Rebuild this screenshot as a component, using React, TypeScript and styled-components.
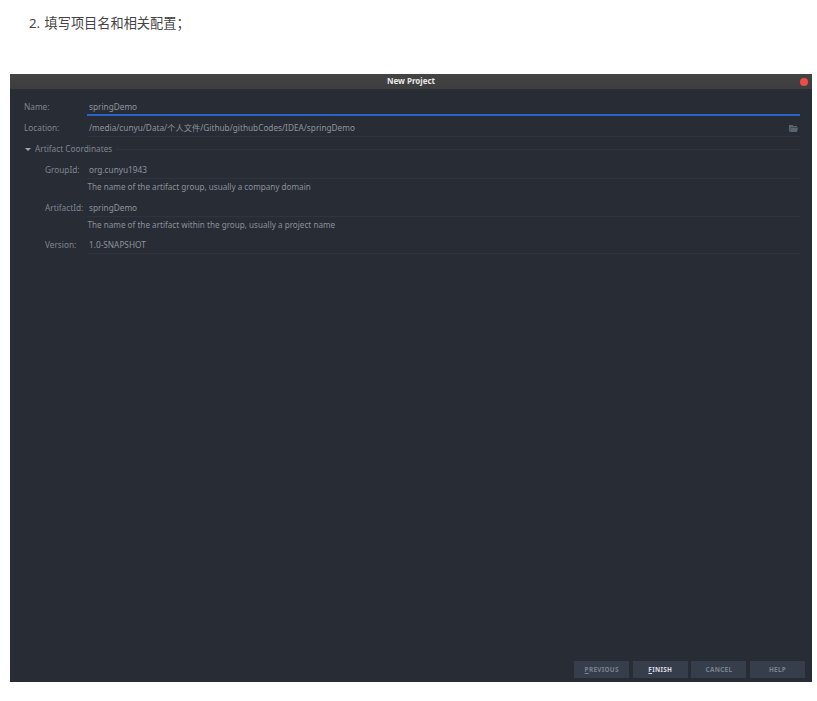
import React from "react";
import styled, { createGlobalStyle } from "styled-components";

const Global = createGlobalStyle`
  html, body { margin: 0; padding: 0; background: #fff; }
  body { font-family: "Noto Sans", "Noto Sans CJK SC", sans-serif; }
`;
const Page = styled.div`
  width: 817px; height: 701px; box-sizing: border-box; overflow: hidden;
  display: flex; flex-direction: column; padding: 0 5px 19px 10px;
`;
const Heading = styled.p`
  margin: 0; height: 74px; box-sizing: border-box; padding: 13px 0 0 19px;
  font: 13.2px/20px "Noto Sans", "Noto Sans CJK SC", sans-serif; color: #444; word-spacing: 1px;
`;
const Win = styled.div`
  flex: 1; display: flex; flex-direction: column; background: #282c34;
`;
const TitleBar = styled.div`
  height: 15px; box-sizing: border-box; padding-bottom: 1px; flex: none; position: relative;
  background: linear-gradient(#444, #3d3d3d);
  display: flex; align-items: center; justify-content: center;
  color: #e8e8e8; font: 700 8px/14px "Noto Sans", sans-serif;
`;
const Close = styled.span`
  position: absolute; right: 4px; top: 3.5px; width: 8px; height: 8px; border-radius: 50%; background: #ee4b44;
`;
const Body = styled.div`
  flex: 1; display: flex; flex-direction: column; padding: 10px 12px 0 14px;
  font: 8.25px/12px "Noto Sans", "Noto Sans CJK SC", sans-serif; color: #8b929d;
`;
const Row = styled.div<{ $indent?: number; $label: number; $top?: number }>`
  display: grid; grid-template-columns: ${(p) => p.$label}px 1fr;
  padding-left: ${(p) => p.$indent ?? 0}px; margin-top: ${(p) => p.$top ?? 0}px;
  align-items: stretch;
`;
const Label = styled.label`
  color: #7f8692; line-height: 15.5px;
`;
const Field = styled.div<{ $focused?: boolean }>`
  height: 17px; box-sizing: border-box; padding-left: 2px;
  display: flex; align-items: center; justify-content: space-between; line-height: 16px;
  color: #8d949f; border-bottom: ${(p) => (p.$focused ? "2px solid #2a62c8" : "1px solid #2f343d")};
`;
const Folder = styled.svg`
  width: 9px; height: 7px; margin-right: 2px; flex: none;
`;
const Section = styled.div`
  display: flex; align-items: center; margin-top: 5px; height: 14px; color: #7f8692;
`;
const Caret = styled.span`
  width: 0; height: 0; margin: 0 4px 0 1px; border: 3px solid transparent; border-top: 3.5px solid #a0a6b0; border-bottom: 0;
`;
const Rule = styled.span`
  flex: 1; margin-left: 4px; height: 1px; background: #2f343d;
`;
const Hint = styled.div`
  padding-left: 63.5px; margin: 1px 0 0 0; height: 14px; line-height: 14px; color: #8a909b; font-size: 8.15px;
`;
const Spacer = styled.div`flex: 1;`;
const Footer = styled.div`
  display: flex; justify-content: flex-end; gap: 3.6px; padding: 0 7px 4px 0; flex: none;
`;
const Btn = styled.button<{ $primary?: boolean }>`
  width: 55px; height: 17px; padding: 0; border: 0; background: #373e4b;
  font: 700 6.4px/17px "Noto Sans", sans-serif; letter-spacing: .3px;
  color: ${(p) => (p.$primary ? "#d9dce1" : "#79818e")};
  & u { text-underline-offset: 1px; }
`;

export default function App() {
  return (
    <Page>
      <Global />
      <Heading>2. 填写项目名和相关配置；</Heading>
      <Win>
        <TitleBar>New Project<Close /></TitleBar>
        <Body>
          <Row $label={63}>
            <Label>Name:</Label>
            <Field $focused>springDemo</Field>
          </Row>
          <Row $label={63} $top={4}>
            <Label>Location:</Label>
            <Field>
              /media/cunyu/Data/个人文件/Github/githubCodes/IDEA/springDemo
              <Folder viewBox="0 0 9 7"><path d="M0 0h3.5l1 1H8v1H2L1 6 0 7zM2.2 2.6H9L8 7H1z" fill="#5c6470" /></Folder>
            </Field>
          </Row>
          <Section><Caret />Artifact Coordinates<Rule /></Section>
          <Row $indent={21} $label={42} $top={6}>
            <Label>GroupId:</Label>
            <Field>org.cunyu1943</Field>
          </Row>
          <Hint>The name of the artifact group, usually a company domain</Hint>
          <Row $indent={21} $label={42} $top={6}>
            <Label>ArtifactId:</Label>
            <Field>springDemo</Field>
          </Row>
          <Hint>The name of the artifact within the group, usually a project name</Hint>
          <Row $indent={21} $label={42} $top={5}>
            <Label>Version:</Label>
            <Field>1.0-SNAPSHOT</Field>
          </Row>
          <Spacer />
        </Body>
        <Footer>
          <Btn><u>P</u>REVIOUS</Btn>
          <Btn $primary><u>F</u>INISH</Btn>
          <Btn>CANCEL</Btn>
          <Btn>HELP</Btn>
        </Footer>
      </Win>
    </Page>
  );
}
